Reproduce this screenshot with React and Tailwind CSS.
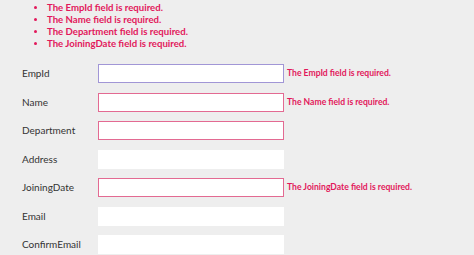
const fields = [
  { name: 'EmpId', state: 'focus', error: 'The EmpId field is required.' },
  { name: 'Name', state: 'error', error: 'The Name field is required.' },
  { name: 'Department', state: 'error' },
  { name: 'Address' },
  { name: 'JoiningDate', state: 'error', error: 'The JoiningDate field is required.' },
  { name: 'Email' },
  { name: 'ConfirmEmail' },
];

const summary = [
  'The EmpId field is required.',
  'The Name field is required.',
  'The Department field is required.',
  'The JoiningDate field is required.',
];

export default function App() {
  return (
    <div className="w-[474px] h-[255px] overflow-hidden bg-[#eeeeee] px-[3px] font-['Lato',sans-serif]">
      <ul className="list-disc pl-[44px] pt-[2px] text-[9.6px] font-bold leading-[12px] text-[#e2185b] marker:text-[#e2185b]">
        {summary.map((s) => (
          <li key={s}>{s}</li>
        ))}
      </ul>

      <div className="mt-[14px] flex flex-col gap-[9.5px]">
        {fields.map((f) => (
          <div key={f.name} className="flex h-[19px] items-center">
            <label className="w-[95px] shrink-0 pl-[19px] text-[10px] text-[#333333]">{f.name}</label>
            <input
              className={
                'h-[19px] w-[186px] shrink-0 bg-white outline-none border ' +
                (f.state === 'focus'
                  ? 'border-[#a196d6]'
                  : f.state === 'error'
                  ? 'border-[#e36a92]'
                  : 'border-white')
              }
            />
            {f.error && (
              <span className="pl-[3px] text-[8.6px] font-bold text-[#e2185b]">{f.error}</span>
            )}
          </div>
        ))}
      </div>
    </div>
  );
}
